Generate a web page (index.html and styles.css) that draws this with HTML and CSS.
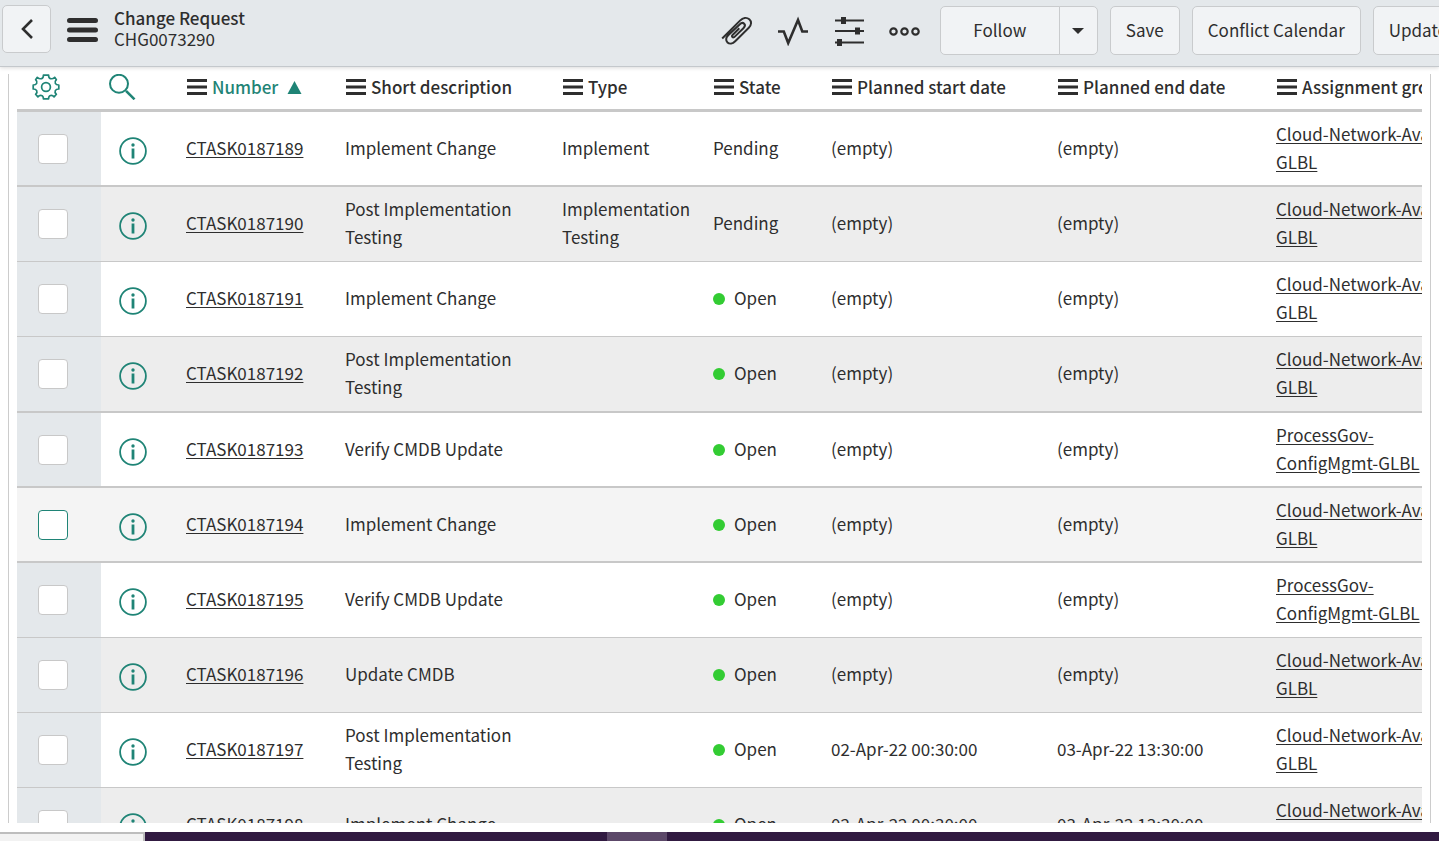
FILE: index.html
```
<!DOCTYPE html>
<html lang="en">
<head>
<meta charset="utf-8">
<title>Change Request CHG0073290</title>
<link rel="stylesheet" href="styles.css">
</head>
<body>
<svg class="defs" aria-hidden="true">
  <symbol id="bars" viewBox="0 0 20 16"><path d="M0 1.500h20M0 8h20M0 14.500h20" stroke="currentColor" stroke-width="3"/></symbol>
  <symbol id="info" viewBox="0 0 28 28"><circle cx="14" cy="14" r="12.900" fill="none" stroke="currentColor" stroke-width="1.800"/><circle cx="14" cy="8" r="1.700" fill="currentColor"/><path d="M14 11.500V21.500" stroke="currentColor" stroke-width="2.800"/></symbol>
</svg>
<header class="toolbar">
  <button class="btn back" aria-label="Back"><svg width="12" height="20" viewBox="0 0 12 20"><path d="M11 1L2 10l9 9" fill="none" stroke="currentColor" stroke-width="2.600"/></svg></button>
  <button class="icon-btn menu" aria-label="Menu"><svg width="31" height="24" viewBox="0 0 31 24"><path d="M2.500 2.500h26M2.500 12h26M2.500 21.500h26" stroke="currentColor" stroke-width="5" stroke-linecap="round"/></svg></button>
  <div class="title">
    <h1>Change Request</h1>
    <p>CHG0073290</p>
  </div>
  <div class="tools">
    <button class="icon-btn" aria-label="Attachments"><svg width="32" height="30" viewBox="0 0 32 30"><path d="M1.200 22.500L19 4.600c3-3 6.800-3.400 9.300-1.300 2.500 2.200 2.300 5.700-.5 8.400L14.200 25.200c-2.600 2.600-5.800 3-7.700 1.200-2-1.900-1.700-4.800.7-7.200L18.600 8.500c1.700-1.700 3.500-1.900 4.600-.8 1.100 1.100.8 2.900-.8 4.500L13.800 20.600c-.9.900-1.800 1-2.400.4-.6-.6-.4-1.500.4-2.300l6.500-6.400" fill="none" stroke="currentColor" stroke-width="2"/></svg></button>
    <button class="icon-btn" aria-label="Activity"><svg width="32" height="30" viewBox="0 0 32 30"><path d="M1 15.500h5.800L11.200 27 21 4l4.300 11.500H31" fill="none" stroke="currentColor" stroke-width="2.600"/></svg></button>
    <button class="icon-btn" aria-label="Personalize form"><svg width="32" height="30" viewBox="0 0 32 30"><path d="M2 4.500h29M2 15h29M2 26.500h29" stroke="currentColor" stroke-width="2"/><path d="M8 1h5v7H8zM22 11.500h5v7h-5zM4 23h5v7H4z" fill="currentColor"/></svg></button>
    <button class="icon-btn" aria-label="More options"><svg width="32" height="30" viewBox="0 0 32 30"><g fill="none" stroke="currentColor" stroke-width="2.200"><circle cx="4.500" cy="15.500" r="3.200"/><circle cx="15.500" cy="15.500" r="3.200"/><circle cx="26.500" cy="15.500" r="3.200"/></g></svg></button>
  </div>
  <div class="actions">
    <div class="split">
      <button class="btn follow">Follow</button><button class="btn caret" aria-label="Follow options"><svg width="12" height="6" viewBox="0 0 12 6"><path d="M0 0h12L6 6z" fill="currentColor"/></svg></button>
    </div>
    <button class="btn">Save</button>
    <button class="btn">Conflict Calendar</button>
    <button class="btn">Update</button>
  </div>
</header>
<main class="panel">
  <div class="list">
    <table>
      <colgroup><col class="c-check"><col class="c-info"><col class="c-number"><col class="c-desc"><col class="c-type"><col class="c-state"><col class="c-start"><col class="c-end"><col class="c-group"></colgroup>
      <thead>
        <tr>
          <th class="gear"><button class="icon-btn" aria-label="Personalize list"><svg width="28" height="26" viewBox="0 0 28 26"><g fill="none" stroke="currentColor" stroke-width="1.700" stroke-linejoin="round"><circle cx="14" cy="13" r="4.400"/><path d="M11.400 1.200Q11.500 4 9.500 4.600Q7.300 5.200 5.300 3.300L3.600 5.700Q5.600 7.600 4.700 9.300Q3.800 11 1.200 11V15Q3.800 15 4.700 16.700Q5.600 18.400 3.600 20.300L5.900 22.900Q7.600 20.900 9.500 21.500Q11.500 22.200 11.400 24.800H16.600Q16.500 22.200 18.500 21.500Q20.400 20.900 22.100 22.900L24.400 20.300Q22.400 18.400 23.300 16.700Q24.200 15 26.800 15V11Q24.200 11 23.300 9.300Q22.400 7.600 24.400 5.700L22.700 3.300Q20.700 5.200 18.500 4.600Q16.500 4 16.600 1.200Z"/></g></svg></button></th>
          <th class="search"><button class="icon-btn" aria-label="Search"><svg width="28" height="26" viewBox="0 0 28 26"><circle cx="11" cy="9.800" r="9" fill="none" stroke="currentColor" stroke-width="2"/><path d="M18 16.800l8.500 8.500" stroke="currentColor" stroke-width="2.600"/></svg></button></th>
          <th class="sorted"><svg class="bars"><use href="#bars"/></svg><a href="#">Number</a><svg class="sort" viewBox="0 0 14 13"><path d="M7 0l7 13H0z" fill="currentColor"/></svg></th>
          <th><svg class="bars"><use href="#bars"/></svg><a href="#">Short description</a></th>
          <th><svg class="bars"><use href="#bars"/></svg><a href="#">Type</a></th>
          <th><svg class="bars"><use href="#bars"/></svg><a href="#">State</a></th>
          <th><svg class="bars"><use href="#bars"/></svg><a href="#">Planned start date</a></th>
          <th><svg class="bars"><use href="#bars"/></svg><a href="#">Planned end date</a></th>
          <th><svg class="bars"><use href="#bars"/></svg><a href="#">Assignment group</a></th>
        </tr>
      </thead>
      <tbody>
        <tr class="strong"><td class="check"><input type="checkbox" aria-label="Select CTASK0187189"></td><td class="info"><button class="icon-btn" aria-label="Preview CTASK0187189"><svg width="28" height="28"><use href="#info"/></svg></button></td><td><a href="#">CTASK0187189</a></td><td>Implement Change</td><td>Implement</td><td>Pending</td><td>(empty)</td><td>(empty)</td><td><a href="#">Cloud-Network-Avail-GLBL</a></td></tr>
        <tr><td class="check"><input type="checkbox" aria-label="Select CTASK0187190"></td><td class="info"><button class="icon-btn" aria-label="Preview CTASK0187190"><svg width="28" height="28"><use href="#info"/></svg></button></td><td><a href="#">CTASK0187190</a></td><td>Post Implementation Testing</td><td>Implementation Testing</td><td>Pending</td><td>(empty)</td><td>(empty)</td><td><a href="#">Cloud-Network-Avail-GLBL</a></td></tr>
        <tr><td class="check"><input type="checkbox" aria-label="Select CTASK0187191"></td><td class="info"><button class="icon-btn" aria-label="Preview CTASK0187191"><svg width="28" height="28"><use href="#info"/></svg></button></td><td><a href="#">CTASK0187191</a></td><td>Implement Change</td><td></td><td><span class="open">Open</span></td><td>(empty)</td><td>(empty)</td><td><a href="#">Cloud-Network-Avail-GLBL</a></td></tr>
        <tr class="strong tall"><td class="check"><input type="checkbox" aria-label="Select CTASK0187192"></td><td class="info"><button class="icon-btn" aria-label="Preview CTASK0187192"><svg width="28" height="28"><use href="#info"/></svg></button></td><td><a href="#">CTASK0187192</a></td><td>Post Implementation Testing</td><td></td><td><span class="open">Open</span></td><td>(empty)</td><td>(empty)</td><td><a href="#">Cloud-Network-Avail-GLBL</a></td></tr>
        <tr class="strong"><td class="check"><input type="checkbox" aria-label="Select CTASK0187193"></td><td class="info"><button class="icon-btn" aria-label="Preview CTASK0187193"><svg width="28" height="28"><use href="#info"/></svg></button></td><td><a href="#">CTASK0187193</a></td><td>Verify CMDB Update</td><td></td><td><span class="open">Open</span></td><td>(empty)</td><td>(empty)</td><td><a href="#">ProcessGov-ConfigMgmt-GLBL</a></td></tr>
        <tr class="strong active"><td class="check"><input type="checkbox" aria-label="Select CTASK0187194"></td><td class="info"><button class="icon-btn" aria-label="Preview CTASK0187194"><svg width="28" height="28"><use href="#info"/></svg></button></td><td><a href="#">CTASK0187194</a></td><td>Implement Change</td><td></td><td><span class="open">Open</span></td><td>(empty)</td><td>(empty)</td><td><a href="#">Cloud-Network-Avail-GLBL</a></td></tr>
        <tr><td class="check"><input type="checkbox" aria-label="Select CTASK0187195"></td><td class="info"><button class="icon-btn" aria-label="Preview CTASK0187195"><svg width="28" height="28"><use href="#info"/></svg></button></td><td><a href="#">CTASK0187195</a></td><td>Verify CMDB Update</td><td></td><td><span class="open">Open</span></td><td>(empty)</td><td>(empty)</td><td><a href="#">ProcessGov-ConfigMgmt-GLBL</a></td></tr>
        <tr><td class="check"><input type="checkbox" aria-label="Select CTASK0187196"></td><td class="info"><button class="icon-btn" aria-label="Preview CTASK0187196"><svg width="28" height="28"><use href="#info"/></svg></button></td><td><a href="#">CTASK0187196</a></td><td>Update CMDB</td><td></td><td><span class="open">Open</span></td><td>(empty)</td><td>(empty)</td><td><a href="#">Cloud-Network-Avail-GLBL</a></td></tr>
        <tr><td class="check"><input type="checkbox" aria-label="Select CTASK0187197"></td><td class="info"><button class="icon-btn" aria-label="Preview CTASK0187197"><svg width="28" height="28"><use href="#info"/></svg></button></td><td><a href="#">CTASK0187197</a></td><td>Post Implementation Testing</td><td></td><td><span class="open">Open</span></td><td>02-Apr-22 00:30:00</td><td>03-Apr-22 13:30:00</td><td><a href="#">Cloud-Network-Avail-GLBL</a></td></tr>
        <tr><td class="check"><input type="checkbox" aria-label="Select CTASK0187198"></td><td class="info"><button class="icon-btn" aria-label="Preview CTASK0187198"><svg width="28" height="28"><use href="#info"/></svg></button></td><td><a href="#">CTASK0187198</a></td><td>Implement Change</td><td></td><td><span class="open">Open</span></td><td>02-Apr-22 00:30:00</td><td>03-Apr-22 13:30:00</td><td><a href="#">Cloud-Network-Avail-GLBL</a></td></tr>
      </tbody>
    </table>
  </div>
</main>
<footer class="taskbar"><div class="status"></div><div class="running"></div></footer>
</body>
</html>
```
FILE: styles.css
```
* { box-sizing: border-box; }
body {
  margin: 0;
  height: 100vh;
  display: flex;
  flex-direction: column;
  overflow: hidden;
  background: #fff;
  color: #2e2e2e;
  font: 17px/28px "Noto Sans CJK SC", "Noto Sans", sans-serif;
}
.defs { display: none; }
button { font: inherit; color: inherit; cursor: pointer; }
svg { display: block; }

.toolbar {
  position: relative;
  z-index: 1;
  flex: none;
  display: flex;
  align-items: flex-start;
  padding: 5px 0 11px 2px;
  background: #e4e8eb;
  border-bottom: 1px solid #c4c8cc;
  box-shadow: 0 1px 4px rgba(0, 0, 0, 0.15);
}
.btn {
  display: flex;
  align-items: center;
  justify-content: center;
  height: 49px;
  padding: 0 15px 2px;
  border: 1px solid #c9cbcd;
  border-radius: 5px;
  background: #f1f3f5;
  white-space: nowrap;
}
.back { width: 49px; height: 48px; flex: none; padding: 0; }
.icon-btn { display: block; padding: 0; border: 0; background: none; }
.menu { margin: 13px 16px 0; }
.title { flex: 1; min-width: 0; padding-top: 2px; }
.title h1, .title p { margin: 0; font-size: 17px; line-height: 21px; }
.title h1 { font-weight: 500; }
.tools { display: flex; gap: 24px; padding-top: 11px; margin-right: 19px; }
.actions { display: flex; gap: 12px; margin: 1px -24px 0 0; }
.split { display: flex; }
.follow { width: 120px; border-radius: 5px 0 0 5px; }
.caret { width: 39px; margin-left: -1px; padding: 0; border-radius: 0 5px 5px 0; }

.panel {
  flex: 1;
  min-height: 0;
  display: flex;
  margin: 7px 8px 9px;
  padding: 0 8px;
  border: solid #ccc;
  border-width: 0 1px;
}
.list { flex: 1; min-width: 0; overflow: hidden; }
table { width: 100%; min-width: 1446px; table-layout: fixed; border-collapse: separate; border-spacing: 0; }
.c-check { width: 84px; }
.c-info { width: 75px; }
.c-number { width: 159px; }
.c-desc { width: 217px; }
.c-type { width: 151px; }
.c-state { width: 118px; }
.c-start { width: 226px; }
.c-end { width: 219px; }
th {
  height: 38px;
  padding: 0 0 9px 10px;
  border-bottom: 3px solid #c8c8c8;
  font-weight: 500;
  line-height: 22px;
  text-align: left;
  vertical-align: top;
  white-space: nowrap;
}
th a { color: inherit; text-decoration: none; vertical-align: middle; }
.bars { display: inline-block; width: 22px; height: 16px; margin-right: 4px; vertical-align: middle; }
.sort { display: inline-block; width: 15px; height: 13px; margin-left: 9px; vertical-align: middle; }
.gear, .search { padding: 0; color: #1f8476; }
.gear { padding-left: 15px; }
.search { padding-left: 7px; }
.sorted a, .sort { color: #1f8476; }
td { padding: 8px 10px 10px; border-bottom: 1px solid #c8c8c8; vertical-align: middle; }
td a { color: inherit; text-decoration: underline; text-underline-offset: 2px; }
tbody tr:nth-child(even) { background: #ededed; }
.strong td { padding-bottom: 9px; border-bottom-width: 2px; }
.tall td { padding-bottom: 10px; }
td.check { background: #e4e8eb; padding-left: 21px; }
tbody tr.active, .active td.check { background: #f4f4f4; }
input[type="checkbox"] {
  appearance: none;
  display: block;
  width: 30px;
  height: 30px;
  margin: 2px 0 0;
  border: 1px solid #c8c8c8;
  border-radius: 4px;
  background: #fff;
}
.active input[type="checkbox"] { border-color: #1f8476; }
td.info { color: #1f8476; padding-left: 18px; }
.info .icon-btn { margin-top: 5px; }
.open::before {
  content: "";
  display: inline-block;
  width: 12px;
  height: 12px;
  margin-right: 9px;
  border-radius: 50%;
  background: #33cc33;
}

.taskbar { flex: none; display: flex; height: 9px; background: #311a41; }
.status { width: 145px; border: solid #bdbdbd; border-width: 2px 2px 0 0; background: #f2f2f2; }
.running { width: 60px; margin-left: 462px; background: #5c4869; }
```
